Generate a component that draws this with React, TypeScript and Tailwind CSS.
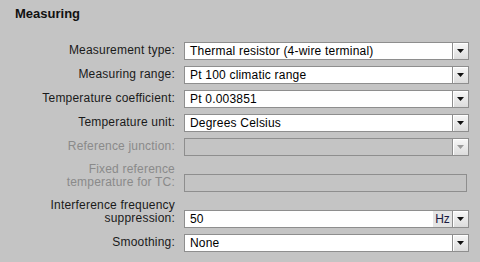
import React from "react";

const Arrow = ({ disabled }: { disabled?: boolean }) => (
  <svg width="7" height="4" viewBox="0 0 7 4">
    <polygon points="0,0 7,0 3.5,4" fill={disabled ? "#9a9a9a" : "#101010"} />
  </svg>
);

const Btn = ({ disabled }: { disabled?: boolean }) => (
  <div className="w-[16px] h-full flex items-center justify-center border-l border-[#8e8e8e] bg-gradient-to-b from-[#f7f7f7] to-[#dcdcdc] shadow-[inset_1px_1px_0_#ffffff]">
    <Arrow disabled={disabled} />
  </div>
);

const Label = ({ lines, disabled }: { lines: string[]; disabled?: boolean }) => (
  <div
    className={`w-[175px] text-right pb-[3px] leading-[13px] tracking-[0.2px] ${
      disabled ? "text-[#8a8a8a]" : "text-[#1a1a1a]"
    }`}
  >
    {lines.map((l, i) => (
      <div key={i}>{l}</div>
    ))}
  </div>
);

const Select = ({ value, disabled, unit }: { value?: string; disabled?: boolean; unit?: string }) => (
  <div
    className={`ml-[9px] w-[285px] h-[18px] flex border border-[#8e8e8e] ${
      disabled ? "bg-[#c4c4c4]" : "bg-white"
    }`}
  >
    <div className="flex-1 pl-[5px] leading-[16px] text-black tracking-[0.2px]">{value}</div>
    {unit && (
      <div className="w-[19px] bg-[#e4e4e4] leading-[16px] text-[#1a1a40] text-center">{unit}</div>
    )}
    <Btn disabled={disabled} />
  </div>
);

const Row = ({ children, className = "" }: { children: React.ReactNode; className?: string }) => (
  <div className={`flex items-end ${className}`}>{children}</div>
);

export default function App() {
  return (
    <div
      className="w-[480px] h-[262px] bg-[#c4c4c4] text-[12px] overflow-hidden"
      style={{ fontFamily: '"Liberation Sans", Arial, sans-serif' }}
    >
      <div className="pl-[15px] pt-[6px] font-bold text-[13px] leading-[16px] text-[#111]">Measuring</div>
      <div className="mt-[20px] flex flex-col gap-[6px]">
        <Row>
          <Label lines={["Measurement type:"]} />
          <Select value="Thermal resistor (4-wire terminal)" />
        </Row>
        <Row>
          <Label lines={["Measuring range:"]} />
          <Select value="Pt 100 climatic range" />
        </Row>
        <Row>
          <Label lines={["Temperature coefficient:"]} />
          <Select value="Pt 0.003851" />
        </Row>
        <Row>
          <Label lines={["Temperature unit:"]} />
          <Select value="Degrees Celsius" />
        </Row>
        <Row>
          <Label lines={["Reference junction:"]} disabled />
          <Select disabled />
        </Row>
        <Row className="mt-[1px]">
          <Label lines={["Fixed reference", "temperature for TC:"]} disabled />
          <div className="ml-[9px] w-[283px] h-[18px] border border-[#8e8e8e]" />
        </Row>
        <Row className="mt-[1px]">
          <Label lines={["Interference frequency", "suppression:"]} />
          <Select value="50" unit="Hz" />
        </Row>
        <Row>
          <Label lines={["Smoothing:"]} />
          <Select value="None" />
        </Row>
      </div>
    </div>
  );
}
